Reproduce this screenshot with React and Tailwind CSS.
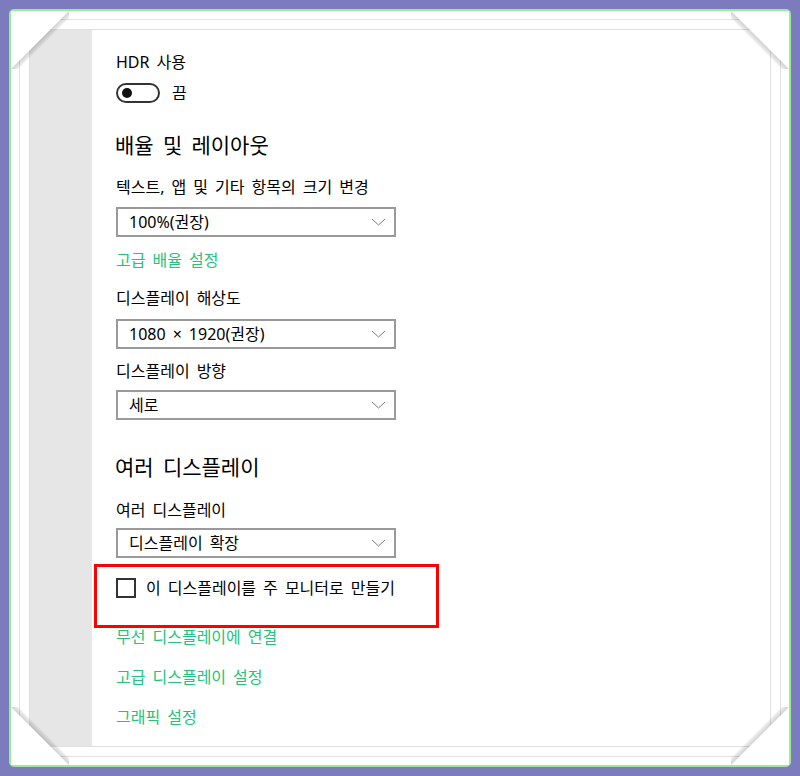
import React from "react";

const GREEN = "text-[#22c47a]";

function Chevron() {
  return (
    <svg width="15" height="8" viewBox="0 0 15 8" className="shrink-0">
      <polyline points="1,1 7.5,7 14,1" fill="none" stroke="#7a7a7a" strokeWidth="1" />
    </svg>
  );
}

function Select({ value, className = "" }) {
  return (
    <div className={`w-[280px] h-[30px] border-2 border-[#9a9a9a] flex items-center justify-between pl-[11px] pr-[8px] ${className}`}>
      <span className="text-[16px] leading-5 text-black [word-spacing:0.18em]">{value}</span>
      <Chevron />
    </div>
  );
}

function Label({ children, className = "" }) {
  return <div className={`text-[16px] leading-5 text-black [word-spacing:0.18em] ${className}`}>{children}</div>;
}

function Heading({ children, className = "" }) {
  return <div className={`text-[21px] leading-7 text-black ml-[-1px] [word-spacing:0.18em] ${className}`}>{children}</div>;
}

function LinkText({ children, className = "" }) {
  return <div className={`text-[16px] leading-5 ${GREEN} [word-spacing:0.18em] ${className}`}>{children}</div>;
}

// corner folds of the photo frame, drawn in page coordinates
function Corner({ transform }) {
  return (
    <g transform={transform}>
      <polygon points="11,11 69,11 11,69" fill="#ffffff" />
      <polygon points="69,11 11,69 18,69 69,18" fill="url(#foldShade)" />
    </g>
  );
}

function FrameCorners() {
  return (
    <svg width="800" height="776" className="absolute inset-0 pointer-events-none">
      <defs>
        <linearGradient id="foldShade" gradientUnits="userSpaceOnUse" x1="40" y1="40" x2="45" y2="45">
          <stop offset="0" stopColor="#000000" stopOpacity="0.18" />
          <stop offset="1" stopColor="#000000" stopOpacity="0" />
        </linearGradient>
      </defs>
      <Corner transform="" />
      <Corner transform="translate(800,0) scale(-1,1)" />
      <Corner transform="translate(0,776) scale(1,-1)" />
      <Corner transform="translate(800,776) scale(-1,-1)" />
    </svg>
  );
}

export default function App() {
  return (
    <div className="relative w-[800px] h-[776px] bg-[#7b7bbd] p-[9px] font-['Noto_Sans','Noto_Sans_CJK_KR',sans-serif]">
      <div className="h-full bg-white border-2 border-[#94ee94] rounded-[5px] p-[8px]">
        <div className="h-full border border-[#e2e2e2] p-[9px]">
          <div className="h-full border border-[#e0e0e0] flex">
            {/* left strip */}
            <div className="w-[62px] bg-[#e6e6e6] shrink-0" />

            {/* settings content */}
            <div className="flex-1 pl-[24px] pt-[22px]">
              <Label>HDR 사용</Label>
              <div className="mt-[11px] h-5 flex items-center gap-[12px]">
                <div className="w-[44px] h-5 rounded-full border-2 border-[#333] flex items-center pl-[4px]">
                  <div className="w-[10px] h-[10px] rounded-full bg-[#111]" />
                </div>
                <span className="text-[16px] leading-5 text-black">끔</span>
              </div>

              <Heading className="mt-[28px]">배율 및 레이아웃</Heading>
              <Label className="mt-[18px]">텍스트, 앱 및 기타 항목의 크기 변경</Label>
              <Select value="100%(권장)" className="mt-[10px]" />
              <LinkText className="mt-[13px]">고급 배율 설정</LinkText>

              <Label className="mt-[18px]">디스플레이 해상도</Label>
              <Select value="1080 × 1920(권장)" className="mt-[11px]" />
              <Label className="mt-[12px]">디스플레이 방향</Label>
              <Select value="세로" className="mt-[9px]" />

              <Heading className="mt-[33px]">여러 디스플레이</Heading>
              <Label className="mt-[19px]">여러 디스플레이</Label>
              <Select value="디스플레이 확장" className="mt-[8px]" />

              <div className="relative mt-[20px] h-5 flex items-center gap-[10px]">
                <div className="w-5 h-5 border-2 border-[#333] shrink-0" />
                <span className="text-[16px] leading-5 text-black [word-spacing:0.18em]">이 디스플레이를 주 모니터로 만들기</span>
                <div className="absolute left-[-22px] top-[-14px] w-[345px] h-[64px] border-[3px] border-[#ff0000]" />
              </div>

              <LinkText className="mt-[29px]">무선 디스플레이에 연결</LinkText>
              <LinkText className="mt-[20px]">고급 디스플레이 설정</LinkText>
              <LinkText className="mt-[20px]">그래픽 설정</LinkText>
            </div>
          </div>
        </div>
      </div>
      <FrameCorners />
    </div>
  );
}
